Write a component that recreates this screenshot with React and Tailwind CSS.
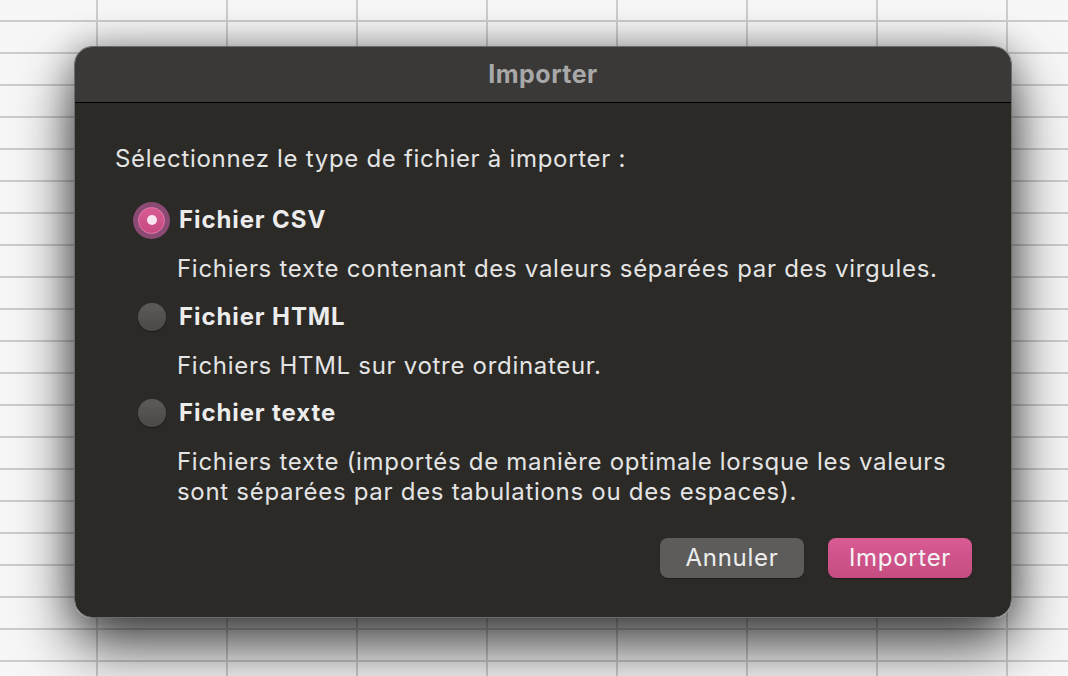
import React, { useState } from 'react';

const options = [
  { id: 'csv', label: 'Fichier CSV', desc: ['Fichiers texte contenant des valeurs séparées par des virgules.'] },
  { id: 'html', label: 'Fichier HTML', desc: ['Fichiers HTML sur votre ordinateur.'] },
  {
    id: 'txt',
    label: 'Fichier texte',
    desc: ['Fichiers texte (importés de manière optimale lorsque les valeurs', 'sont séparées par des tabulations ou des espaces).'],
  },
];

const Radio = ({ checked }) =>
  checked ? (
    <div className="w-[37px] h-[37px] -ml-[5px] rounded-full bg-[#8a4a74] flex items-center justify-center">
      <div className="w-[27px] h-[27px] rounded-full bg-gradient-to-b from-[#d95a93] to-[#c64b82] border border-[#e27aa8] flex items-center justify-center">
        <div className="w-[10px] h-[10px] rounded-full bg-[#f6e4ee]" />
      </div>
    </div>
  ) : (
    <div className="w-[28px] h-[28px] rounded-full bg-gradient-to-b from-[#5c5b5a] to-[#4a4948] shadow-[0_1px_1px_rgba(0,0,0,0.4)]" />
  );

export default function App() {
  const [selected, setSelected] = useState('csv');

  return (
    <div className="relative w-[1068px] h-[676px] overflow-hidden bg-[#f7f7f7] bg-[linear-gradient(to_right,#cdcdcd_2px,transparent_2px),linear-gradient(to_bottom,#cdcdcd_2px,transparent_2px)] bg-[size:130px_32px] bg-[position:96px_20px] font-['Inter','Noto_Sans',sans-serif]">
      <div className="absolute left-[74px] top-[46px] w-[938px] h-[572px] rounded-[18px] border border-[#6c6c6c] overflow-hidden shadow-[0_28px_60px_rgba(0,0,0,0.72),0_0_34px_rgba(0,0,0,0.3)]">
        <div className="h-[56px] bg-[#3a3938] border-b border-black flex items-center justify-center">
          <span className="text-[25px] font-bold text-[#a8a8a8] tracking-[0.5px]">Importer</span>
        </div>
        <div className="h-[515px] bg-[#2b2a27] pl-[40px] pr-[39px] pt-[41px] text-[#e4e4e4] text-[24px] tracking-[0.7px] leading-[30px]">
          <p>Sélectionnez le type de fichier à importer :</p>
          <div className="mt-[31px] pl-[23px] flex flex-col">
            {options.map((o, i) => (
              <div key={o.id} className={i === 0 ? '' : i === 1 ? 'mt-[18px]' : 'mt-[17px]'}>
                <button onClick={() => setSelected(o.id)} className="flex items-center gap-[13px] h-[30px] tracking-[0.9px]">
                  <Radio checked={selected === o.id} />
                  <span className={`font-bold text-[#ececec] ${selected === o.id ? '-ml-[4px]' : ''}`}>{o.label}</span>
                </button>
                <div className="mt-[19px] pl-[39px]">
                  {o.desc.map((d) => (
                    <p key={d}>{d}</p>
                  ))}
                </div>
              </div>
            ))}
          </div>
          <div className="mt-[31px] flex justify-end gap-[24px]">
            <button className="w-[144px] h-[40px] rounded-[8px] bg-[#5d5c5b] text-[#ededed] tracking-[0.7px] shadow-[0_1px_1px_rgba(0,0,0,0.3)]">Annuler</button>
            <button className="w-[144px] h-[40px] rounded-[8px] bg-gradient-to-b from-[#d95b93] to-[#c54c81] text-[#f4f4f4] tracking-[0.7px] shadow-[0_1px_1px_rgba(0,0,0,0.3)]">Importer</button>
          </div>
        </div>
      </div>
    </div>
  );
}
